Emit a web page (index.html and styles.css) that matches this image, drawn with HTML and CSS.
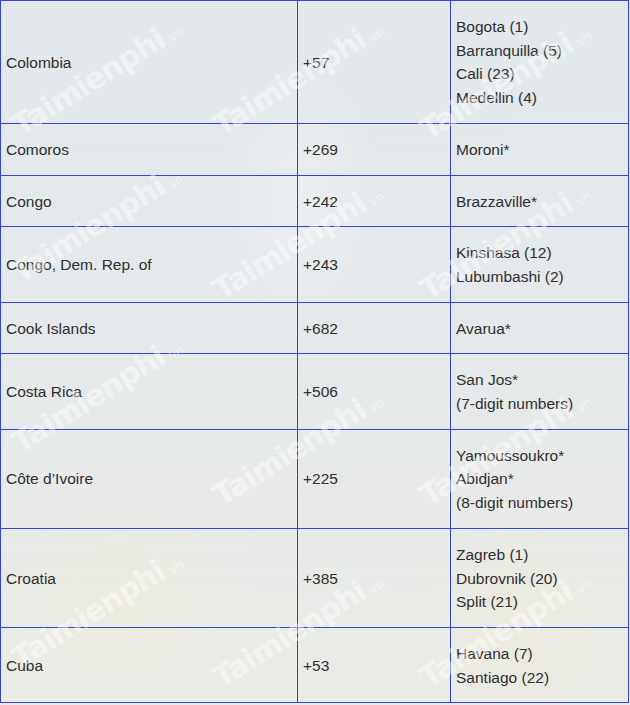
FILE: index.html
```html
<!DOCTYPE html>
<html>
<head>
<meta charset="utf-8">
<link rel="stylesheet" href="styles.css">
</head>
<body>
<div class="page">
<table class="codes">
<colgroup><col class="c1"><col class="c2"><col class="c3"></colgroup>
<tr><td>Colombia</td><td>+57</td><td>Bogota (1)<br>Barranquilla (5)<br>Cali (23)<br>Medellin (4)</td></tr>
<tr><td>Comoros</td><td>+269</td><td>Moroni*</td></tr>
<tr><td>Congo</td><td>+242</td><td>Brazzaville*</td></tr>
<tr><td>Congo, Dem. Rep. of</td><td>+243</td><td>Kinshasa (12)<br>Lubumbashi (2)</td></tr>
<tr><td>Cook Islands</td><td>+682</td><td>Avarua*</td></tr>
<tr><td>Costa Rica</td><td>+506</td><td>San Jos*<br>(7-digit numbers)</td></tr>
<tr><td>Côte d’Ivoire</td><td>+225</td><td>Yamoussoukro*<br>Abidjan*<br>(8-digit numbers)</td></tr>
<tr><td>Croatia</td><td>+385</td><td>Zagreb (1)<br>Dubrovnik (20)<br>Split (21)</td></tr>
<tr><td>Cuba</td><td>+53</td><td>Havana (7)<br>Santiago (22)</td></tr>
</table>
<div class="marks" aria-hidden="true">
  <span class="wm w1">Taimienphi<small>.vn</small></span>
  <span class="wm w2">Taimienphi<small>.vn</small></span>
  <span class="wm w3">Taimienphi<small>.vn</small></span>
  <span class="wm w4">Taimienphi<small>.vn</small></span>
  <span class="wm w5">Taimienphi<small>.vn</small></span>
  <span class="wm w6">Taimienphi<small>.vn</small></span>
  <span class="wm w7">Taimienphi<small>.vn</small></span>
  <span class="wm w8">Taimienphi<small>.vn</small></span>
  <span class="wm w9">Taimienphi<small>.vn</small></span>
  <span class="wm w10">Taimienphi<small>.vn</small></span>
  <span class="wm w11">Taimienphi<small>.vn</small></span>
  <span class="wm w12">Taimienphi<small>.vn</small></span>
</div>
</div>
</body>
</html>
```

FILE: styles.css
```css
html, body {
  margin: 0;
  padding: 0;
}
body {
  width: 630px;
  height: 705px;
  overflow: hidden;
  background: linear-gradient(180deg, #e2e8eb 0%, #e5e9eb 45%, #eaebe6 100%);
  font-family: "Liberation Sans", Arial, sans-serif;
  font-size: 15.5px;
  color: #2f2f2f;
}
.page {
  position: relative;
  width: 630px;
  height: 705px;
  background:
    radial-gradient(ellipse 120px 200px at 300px 200px, rgba(255,255,255,0.25), rgba(255,255,255,0) 70%),
    radial-gradient(ellipse 160px 140px at 120px 600px, rgba(240,235,210,0.45), rgba(240,235,210,0) 70%),
    radial-gradient(ellipse 160px 140px at 520px 620px, rgba(240,235,210,0.45), rgba(240,235,210,0) 70%);
}
.codes {
  border-collapse: collapse;
  width: 628px;
  table-layout: fixed;
  position: relative;
}
.c1 { width: 297px; }
.c2 { width: 153px; }
.c3 { width: 178px; }
.codes td {
  border: 1px solid #3344d0;
  padding: 14px 5px 13px 5px;
  line-height: 23.7px;
  vertical-align: middle;
}
.marks {
  position: absolute;
  inset: 0;
  pointer-events: none;
  overflow: hidden;
}
.wm {
  position: absolute;
  font-family: "DejaVu Sans", sans-serif;
  font-weight: bold;
  font-size: 30px;
  color: rgba(255,255,255,0.45);
  transform: rotate(-32deg);
  transform-origin: left bottom;
  white-space: nowrap;
  letter-spacing: -1px;
}
.wm small {
  font-size: 13px;
  font-weight: normal;
  margin-left: 2px;
}
.w1 { left: 24px; top: 108px; }
.w2 { left: 225px; top: 108px; }
.w3 { left: 432px; top: 112px; }
.w4 { left: 24px; top: 255px; }
.w5 { left: 225px; top: 272px; }
.w6 { left: 432px; top: 272px; }
.w7 { left: 24px; top: 425px; }
.w8 { left: 225px; top: 478px; }
.w9 { left: 432px; top: 478px; }
.w10 { left: 24px; top: 640px; }
.w11 { left: 225px; top: 660px; }
.w12 { left: 432px; top: 660px; }
```
